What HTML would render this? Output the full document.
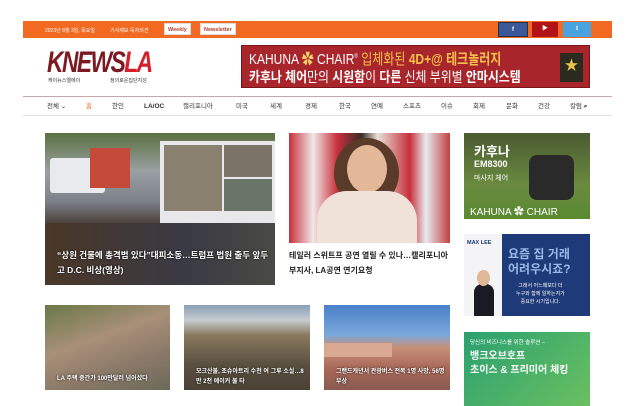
<!DOCTYPE html>
<html><head><meta charset="utf-8"><style>
*{margin:0;padding:0;box-sizing:border-box}
body{width:632px;height:406px;background:#fff;position:relative;overflow:hidden;font-family:"Liberation Sans","Noto Sans CJK KR",sans-serif}
.a{position:absolute}
.top{left:23px;top:21px;width:589px;height:17px;background:#f26a21}
.t{color:#fff;font-size:5px;top:6px}
.box{background:#fff;color:#b83a20;font-size:5.5px;font-weight:bold;top:2px;height:12px;line-height:12px;padding:0 3px;border:1px solid #ddd}
.soc{top:1px;height:15px;color:#fff;font-size:6px;text-align:center;line-height:15px;font-weight:bold}
.logo{left:47px;top:46px;font-size:30px;font-weight:bold;font-style:italic;letter-spacing:-2px;transform:scaleX(0.76);transform-origin:left;color:#7b1a22;font-family:"Liberation Sans",sans-serif}
.nav{top:96px;left:23px;width:589px;height:20px;border-top:1px solid #c9a7a7;border-bottom:1px solid #ddd}
.nav span{position:absolute;top:5px;font-size:6.5px;line-height:9px;color:#333}
.img{position:absolute;overflow:hidden}
.cap{position:absolute;color:#fff;font-weight:bold;text-shadow:0 0 2px #000}
</style></head><body>
<div class="a top">
 <div class="a t" style="left:22px">2023년 8월 3일, 목요일</div>
 <div class="a t" style="left:87px">기사제보·독자의견</div>
 <div class="a box" style="left:141px">Weekly</div>
 <div class="a box" style="left:177px">Newsletter</div>
 <div class="a soc" style="left:475px;width:30px;background:#3b5998;border:1px solid #234">f</div>
 <div class="a soc" style="left:509px;width:26px;background:#b31217">▶</div>
 <div class="a soc" style="left:540px;width:28px;background:#4aa3df">t</div>
</div>
<div class="a logo">KNEWS<span style="color:#d4202c">LA</span></div>
<div class="a" style="left:48px;top:77px;font-size:5px;color:#333">케이뉴스엘에이</div>
<div class="a" style="left:110px;top:77px;font-size:5px;color:#333">정의로운집단지성</div>
<div class="a" style="left:241px;top:45px;width:349px;height:43px;background:#a8262b;border:1px solid #7d1518">
 <div class="a" style="left:7px;top:2px;font-size:15px;color:#fff;white-space:nowrap;transform:scaleX(0.8);transform-origin:left">KAHUNA <span style="color:#f5d26a">✿</span> CHAIR<sup style="font-size:6px">®</sup> <span style="color:#f6c24a">입체화된 <b>4D+@ 테크놀러지</b></span></div>
 <div class="a" style="left:7px;top:21px;font-size:14px;color:#fff;font-weight:bold;white-space:nowrap;transform:scaleX(0.85);transform-origin:left">카후나 체어<span style="font-weight:normal">만의</span> 시원함<span style="font-weight:normal">이</span> 다른 <span style="font-weight:normal">신체 부위별</span> 안마시스템</div>
 <div class="a" style="left:318px;top:7px;width:23px;height:29px;background:#2a2a1e;color:#e8c44a;text-align:center;font-size:14px;line-height:24px">★</div>
</div>
<div class="a nav">
 <span style="left:24px">전체 ⌄</span><span style="left:63px;color:#f26a21">홈</span><span style="left:89px">한인</span><span style="left:121px;font-weight:bold">LA/OC</span><span style="left:160px">캘리포니아</span><span style="left:213px">미국</span><span style="left:247px">세계</span><span style="left:282px">경제</span><span style="left:316px">한국</span><span style="left:348px">연예</span><span style="left:380px">스포츠</span><span style="left:418px">이슈</span><span style="left:450px">회제</span><span style="left:483px">문화</span><span style="left:515px">건강</span><span style="left:547px">칼럼 <b>⌕</b></span>
</div>
<div class="img" style="left:45px;top:133px;width:230px;height:152px;background:linear-gradient(180deg,#5a7040 0%,#9aa0a4 25%,#7c8088 45%,#4a4038 60%,#3a3a40 100%)">
 <div class="a" style="left:5px;top:25px;width:55px;height:35px;background:#e8eaee;border-radius:3px"></div>
 <div class="a" style="left:45px;top:15px;width:40px;height:40px;background:#c54a3a"></div>
 <div class="a" style="left:115px;top:8px;width:115px;height:82px;background:#e8e8ea"></div>
 <div class="a" style="left:119px;top:12px;width:58px;height:66px;background:#8a8070"></div>
 <div class="a" style="left:179px;top:12px;width:48px;height:32px;background:#7a7468"></div>
 <div class="a" style="left:179px;top:46px;width:48px;height:32px;background:#6a7468"></div>
 <div class="a" style="left:0;top:90px;width:230px;height:62px;background:linear-gradient(90deg,#4a3828,#3a3a44 60%,#4a4a44)"></div>
 <div class="cap" style="left:12px;top:115px;font-size:8.5px;line-height:15px;width:215px">“상원 건물에 총격범 있다”대피소동…트럼프 법원 출두 앞두고 D.C. 비상(영상)</div>
</div>
<div class="img" style="left:289px;top:133px;width:161px;height:110px;background:linear-gradient(90deg,#c8303a 0%,#f0e8e8 15%,#c8303a 30%,#3a2a28 45%,#e8e0d8 55%,#c8303a 75%,#e8eaf0 85%,#c04040 100%)">
 <div class="a" style="left:45px;top:5px;width:65px;height:70px;border-radius:50%;background:#5a3a28"></div>
 <div class="a" style="left:58px;top:12px;width:40px;height:48px;border-radius:50%;background:#e2b898"></div>
 <div class="a" style="left:28px;top:58px;width:100px;height:60px;border-radius:30px 30px 0 0;background:#f0e2d8"></div>
</div>
<div class="a" style="left:289px;top:248px;width:165px;font-size:8px;line-height:15px;color:#222;font-weight:bold">테일러 스위트프 공연 열릴 수 있나…캘리포니아 부지사, LA공연 연기요청</div>
<div class="img" style="left:45px;top:305px;width:125px;height:85px;background:linear-gradient(160deg,#6a7848,#a89078 40%,#8a7868 70%,#6a6a58)"><div class="cap" style="left:12px;top:68px;font-size:6px">LA 주택 중간가 100만달러 넘어섰다</div></div>
<div class="img" style="left:184px;top:305px;width:126px;height:85px;background:linear-gradient(180deg,#8aa0b8 0%,#c8ccd0 18%,#8a7a60 35%,#5a5040 70%,#4a4236 100%)"><div class="cap" style="left:12px;top:62px;font-size:6px;line-height:10px;width:110px">모크산불, 조슈아트리 수천 여 그루 소실…8만 2천 에이커 불 타</div></div>
<div class="img" style="left:324px;top:305px;width:126px;height:85px;background:linear-gradient(180deg,#4a80c8 0%,#7aa8dc 35%,#c89078 50%,#a86858 75%,#8a5a50 100%)"><div class="a" style="left:0;top:38px;width:68px;height:14px;background:#d8a890"></div><div class="cap" style="left:12px;top:62px;font-size:6px;line-height:10px;width:110px">그랜드캐년서 관광버스 전복 1명 사망, 56명 부상</div></div>
<div class="img" style="left:464px;top:133px;width:126px;height:86px;background:linear-gradient(180deg,#4a5a30,#6a8a40 60%,#5a8a30)">
 <div class="a" style="left:10px;top:8px;color:#fff;font-size:13px;font-weight:bold">카후나</div>
 <div class="a" style="left:10px;top:26px;color:#fff;font-size:9px;font-weight:bold">EM8300</div>
 <div class="a" style="left:10px;top:40px;color:#fff;font-size:7px">마사지 체어</div>
 <div class="a" style="left:65px;top:22px;width:45px;height:45px;background:#2a2a2a;border-radius:8px"></div>
 <div class="a" style="left:6px;top:70px;color:#fff;font-size:10px;white-space:nowrap">KAHUNA ✿ CHAIR</div>
</div>
<div class="img" style="left:464px;top:234px;width:126px;height:82px;background:#1e3a78">
 <div class="a" style="left:0;top:0;width:38px;height:82px;background:#f4f4f6"></div>
 <div class="a" style="left:3px;top:6px;font-size:5.5px;font-weight:bold;color:#1e3a78">MAX LEE</div>
 <div class="a" style="left:10px;top:50px;width:20px;height:32px;background:#1a1a24;border-radius:8px 8px 0 0"></div>
 <div class="a" style="left:13px;top:36px;width:13px;height:16px;background:#e0b898;border-radius:50%"></div>
 <div class="a" style="left:44px;top:13px;color:#9ab8e8;font-size:12px;line-height:15px;font-weight:bold">요즘 집 거래<br>어려우시죠?</div>
 <div class="a" style="left:52px;top:48px;color:#fff;font-size:5px;line-height:8px;text-align:center">그래서 어느때보다 더<br>누구와 함께 일하는지가<br>중요한 시기입니다.</div>
</div>
<div class="img" style="left:464px;top:332px;width:126px;height:74px;background:linear-gradient(135deg,#2aa070,#6ac060)">
 <div class="a" style="left:6px;top:6px;color:#fff;font-size:5.5px">당신의 비즈니스를 위한 솔루션 –</div>
 <div class="a" style="left:6px;top:18px;color:#fff;font-size:10px;line-height:14px;font-weight:bold">뱅크오브호프<br>초이스 &amp; 프리미어 체킹</div>
</div>
</body></html>
